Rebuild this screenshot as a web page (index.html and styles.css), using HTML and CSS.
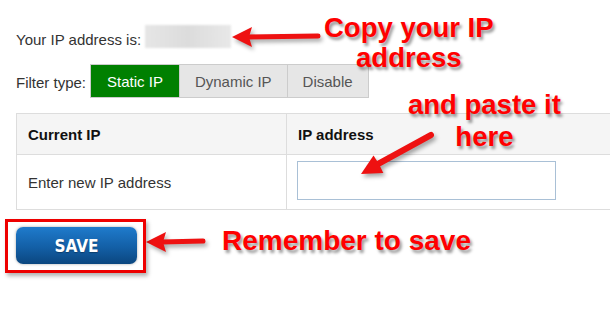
FILE: index.html
```html
<!DOCTYPE html>
<html lang="en">
<head>
    <meta charset="UTF-8">
    <meta name="viewport" content="width=device-width, initial-scale=1.0">
    <title>IP Filter</title>
    <link rel="stylesheet" href="styles.css">
</head>
<body>
    <div class="page">
        <div class="ip-row">
            <span class="label">Your IP address is:</span>
            <span class="ip-value"></span>
        </div>
        <div class="filter-row">
            <span class="label filter-label">Filter type:</span>
            <div class="tabs">
                <button class="tab active">Static IP</button>
                <button class="tab">Dynamic IP</button>
                <button class="tab">Disable</button>
            </div>
        </div>
        <table class="ip-table">
            <tr>
                <th class="col-current">Current IP</th>
                <th class="col-last">IP address</th>
            </tr>
            <tr>
                <td class="col-current">Enter new IP address</td>
                <td class="input-cell col-last"><input type="text" class="ip-input"></td>
            </tr>
        </table>
        <div class="actions">
            <button class="save-btn">SAVE</button>
        </div>
    </div>

    <!-- annotations drawn over the page -->
    <div class="notes">
        <svg class="arrows" width="610" height="316" viewBox="0 0 610 316">
            <g fill="#ee1111" stroke="#ee1111">
                <!-- copy arrow -->
                <line x1="318" y1="36" x2="248" y2="37" stroke-width="5" stroke-linecap="round"/>
                <polygon points="232,37 252,27 249,37 252,47" stroke="none"/>
                <!-- paste arrow -->
                <line x1="431" y1="135" x2="378" y2="164" stroke-width="6" stroke-linecap="round"/>
                <polygon points="361,174 373.5,155.5 379,164 383.3,172.9" stroke="none"/>
                <!-- save arrow -->
                <line x1="203" y1="241" x2="162" y2="242" stroke-width="5" stroke-linecap="round"/>
                <polygon points="146,242 166,232 163,242 166,252" stroke="none"/>
            </g>
        </svg>
        <div class="note note-copy">Copy your IP<br>address</div>
        <div class="note note-paste">and paste it<br>here</div>
        <div class="note note-save">Remember to save</div>
        <div class="save-frame"></div>
    </div>
</body>
</html>
```

FILE: styles.css
```css
/* base page */
html, body {
    overflow: hidden;
}
body {
    margin: 0;
    padding: 0;
    background-color: #FFFFFF;
    color: #333333;
    font-family: "Liberation Sans", Arial, sans-serif;
    font-size: 15px;
    position: relative;
    width: 610px;
    height: 316px;
}
.page {
    padding: 25px 0 0 16px;
}
.label {
    line-height: 17px;
}

/* ip row */
.ip-row {
    display: flex;
    align-items: flex-end;
    height: 23px;
}
.ip-value {
    display: block;
    width: 86px;
    height: 23px;
    margin-left: 4px;
    background: linear-gradient(90deg, #e6e6e6, #dcdcdc 50%, #e8e8e8);
    filter: blur(0.8px);
}

/* filter tabs */
.filter-row {
    display: flex;
    align-items: center;
    margin-top: 16px;
}
.filter-label {
    padding-top: 3px;
}
.tabs {
    display: flex;
    margin-left: 4px;
}
.tab {
    height: 34px;
    padding: 0 15px;
    border: 1px solid #cccccc;
    border-left: none;
    background-color: #e6e6e6;
    color: #555555;
    font-family: inherit;
    font-size: 15px;
    cursor: pointer;
}
.tab:first-child {
    border-left: 1px solid #cccccc;
    padding: 0 16px;
}
.tab.active {
    background-color: #008000;
    color: #FFFFFF;
}

/* table */
.ip-table {
    margin-top: 15px;
    width: 594px;
    border-collapse: collapse;
}
.ip-table th, .ip-table td {
    border: 1px solid #dddddd;
    text-align: left;
    padding: 0 11px;
}
.ip-table .col-last {
    border-right: none;
}
.ip-table th {
    background-color: #f5f5f5;
    color: #111111;
    font-weight: bold;
    height: 40px;
}
.ip-table td {
    color: #333333;
}
.col-current {
    width: 247px;
}
.ip-table td.input-cell {
    padding: 6px 10px 9px 10px;
}
.ip-input {
    display: block;
    width: 259px;
    height: 39px;
    box-sizing: border-box;
    border: 1px solid #a9c0d6;
    margin: 0;
}

/* save */
.actions {
    margin-top: 17px;
}
.save-btn {
    width: 121px;
    height: 37px;
    border: none;
    border-radius: 7px;
    background: linear-gradient(#1f7bcc, #135fa6 55%, #0b467f);
    color: #FFFFFF;
    font-family: "DejaVu Sans Condensed", "DejaVu Sans", sans-serif;
    font-weight: bold;
    font-size: 17px;
    box-shadow: 0 0 3px rgba(0, 0, 0, 0.35);
    text-shadow: 0 1px 1px rgba(0, 0, 0, 0.3);
    cursor: pointer;
}

/* annotations */
.notes {
    position: absolute;
    top: 0;
    left: 0;
    width: 610px;
    height: 316px;
    pointer-events: none;
}
.arrows {
    position: absolute;
    top: 0;
    left: 0;
    filter: drop-shadow(2px 3px 2px rgba(0, 0, 0, 0.35));
}
.note {
    position: absolute;
    color: #ff0000;
    font-family: "Liberation Sans", Arial, sans-serif;
    font-weight: bold;
    font-size: 27.5px;
    line-height: 30px;
    text-align: center;
    white-space: nowrap;
    text-shadow: 2px 3px 3px rgba(0, 0, 0, 0.4);
}
.note-copy {
    left: 324px;
    top: 13px;
}
.note-paste {
    left: 408px;
    top: 89px;
    line-height: 32px;
}
.note-save {
    left: 222px;
    top: 226px;
    font-size: 28px;
}
.save-frame {
    position: absolute;
    left: 5px;
    top: 219px;
    width: 141px;
    height: 54px;
    box-sizing: border-box;
    border: 3px solid #ee0000;
    box-shadow: 2px 3px 4px rgba(0, 0, 0, 0.3);
}
```
